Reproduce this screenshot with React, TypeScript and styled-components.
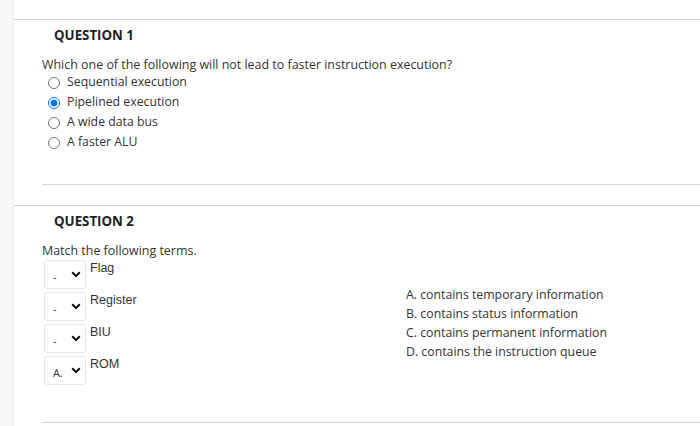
import React from 'react';
import styled, { createGlobalStyle } from 'styled-components';

const GlobalStyle = createGlobalStyle`
  html, body {
    margin: 0;
    padding: 0;
    background: #ffffff;
  }
  body {
    font-family: "Open Sans", "Liberation Sans", Arial, sans-serif;
    color: #333333;
  }
`;

const options = ['Sequential execution', 'Pipelined execution', 'A wide data bus', 'A faster ALU'];
const terms = [
  { value: '-', label: 'Flag' },
  { value: '-', label: 'Register' },
  { value: '-', label: 'BIU' },
  { value: 'A.', label: 'ROM' },
];
const answers = [
  'A. contains temporary information',
  'B. contains status information',
  'C. contains permanent information',
  'D. contains the instruction queue',
];

const App: React.FC = () => {
  return (
    <>
      <GlobalStyle />
      <Page>
        <Rail />
        <Main>
          <Section>
            <Title>QUESTION 1</Title>
            <Body>
              <Prompt>Which one of the following will not lead to faster instruction execution?</Prompt>
              <OptionList>
                {options.map((o, i) => (
                  <OptionRow key={o}>
                    <Radio checked={i === 1} />
                    <span>{o}</span>
                  </OptionRow>
                ))}
              </OptionList>
              <InnerRule gap={33} />
            </Body>
          </Section>
          <Section>
            <Title>QUESTION 2</Title>
            <Body>
              <Prompt>Match the following terms.</Prompt>
              <MatchGrid>
                <TermList>
                  {terms.map((t) => (
                    <TermRow key={t.label}>
                      <SelectBox>
                        <SelectValue>{t.value}</SelectValue>
                        <svg width="10" height="7" viewBox="0 0 10 7">
                          <path d="M1.2 1.2 L5 5 L8.8 1.2" fill="none" stroke="#111" strokeWidth="2" />
                        </svg>
                      </SelectBox>
                      <TermLabel>{t.label}</TermLabel>
                    </TermRow>
                  ))}
                </TermList>
                <AnswerList>
                  {answers.map((a) => (
                    <AnswerItem key={a}>{a}</AnswerItem>
                  ))}
                </AnswerList>
              </MatchGrid>
              <InnerRule gap={37} />
            </Body>
          </Section>
        </Main>
      </Page>
    </>
  );
};

export default App;

const Page = styled.div`
  display: flex;
  width: 700px;
  height: 426px;
  overflow: hidden;
`;

const Rail = styled.div`
  width: 13px;
  flex-shrink: 0;
  background-color: #f6f6f6;
  border-right: 1px solid #f0f0f0;
`;

const Main = styled.div`
  flex: 1;
  padding-top: 19px;
`;

const Section = styled.section`
  border-top: 1px solid #d4d4d4;
  padding-top: 5px;
  margin-bottom: 20px;
`;

const Title = styled.h3`
  margin: 0 0 0 40px;
  font-size: 13.3px;
  font-weight: 700;
  color: #222;
  line-height: 20px;
`;

const Body = styled.div`
  padding-left: 28px;
`;

const Prompt = styled.div`
  margin-top: 12px;
  font-size: 12.45px;
  line-height: 16px;
  color: #333;
`;

const OptionList = styled.div`
  display: flex;
  flex-direction: column;
  padding-left: 6px;
  margin-top: -2px;
`;

const OptionRow = styled.label`
  display: flex;
  align-items: center;
  gap: 7px;
  height: 20px;
  font-size: 12.3px;
  color: #333;
`;

const Radio = styled.span<{ checked?: boolean }>`
  width: 12px;
  height: 12px;
  border-radius: 50%;
  box-sizing: border-box;
  border: 1px solid ${(p) => (p.checked ? '#0075ff' : '#777')};
  background: ${(p) => (p.checked ? 'radial-gradient(circle, #0075ff 0 3.2px, #fff 3.7px)' : '#fff')};
  margin-top: 3px;
`;

const InnerRule = styled.div<{ gap: number }>`
  margin-top: ${(p) => p.gap}px;
  border-top: 1px solid #d4d4d4;
`;

const MatchGrid = styled.div`
  display: flex;
  align-items: center;
  margin-top: 1px;
`;

const TermList = styled.div`
  display: flex;
  flex-direction: column;
  gap: 3px;
  padding-left: 2px;
  width: 362px;
`;

const TermRow = styled.div`
  display: flex;
  align-items: flex-start;
  gap: 4px;
`;

const SelectBox = styled.div`
  width: 42px;
  height: 29px;
  box-sizing: border-box;
  border: 1px solid #e6e6e6;
  border-radius: 3px;
  display: flex;
  align-items: center;
  justify-content: space-between;
  padding: 0 4px 0 8px;
  font-size: 11px;
  color: #333;
`;

const SelectValue = styled.span`
  margin-top: 4px;
`;

const TermLabel = styled.span`
  font-family: "Liberation Sans", Arial, sans-serif;
  font-size: 12.5px;
  color: #333;
  margin-top: 1px;
`;

const AnswerList = styled.div`
  display: flex;
  flex-direction: column;
`;

const AnswerItem = styled.div`
  font-size: 12.3px;
  line-height: 19px;
  color: #333;
`;
